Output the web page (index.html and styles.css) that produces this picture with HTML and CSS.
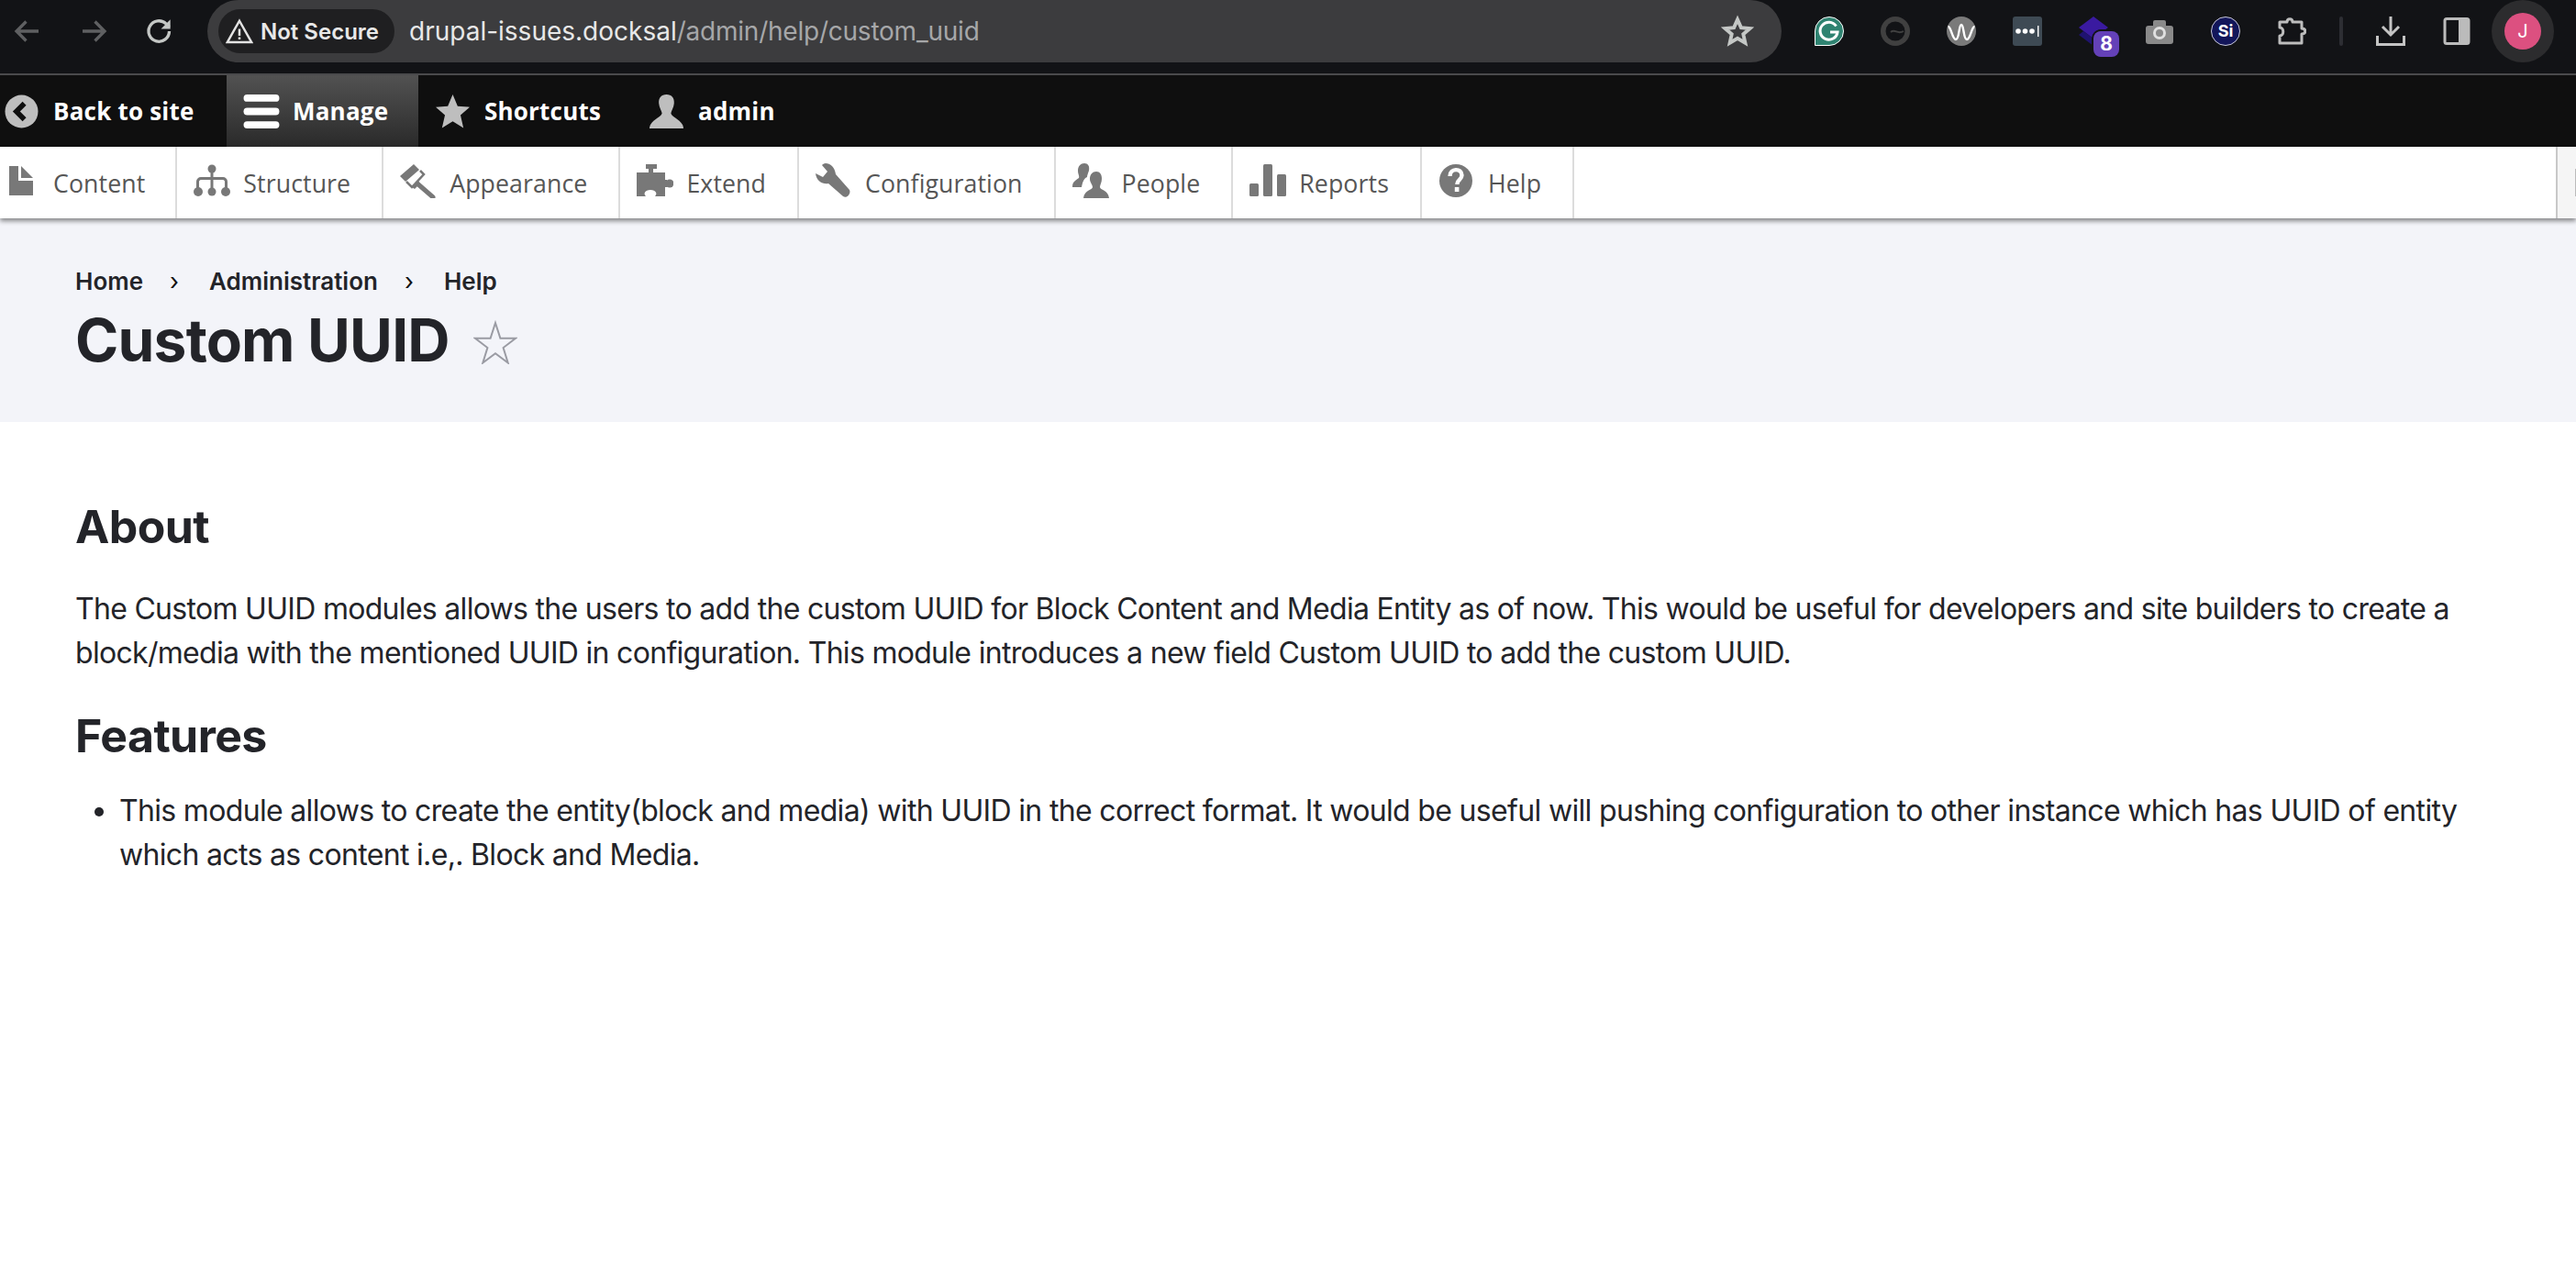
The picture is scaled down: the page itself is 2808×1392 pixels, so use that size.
FILE: index.html
```html
<!DOCTYPE html>
<html lang="en">
<head>
    <meta charset="UTF-8">
    <title>Custom UUID</title>
    <link rel="stylesheet" href="styles.css">
</head>
<body>
    <header class="browser-bar">
        <div class="nav-buttons">
            <svg class="nav-icon" viewBox="0 0 24 24"><path d="M20 12H5M11 5l-7 7 7 7" fill="none" stroke="#5f6062" stroke-width="2.2"/></svg>
            <svg class="nav-icon" viewBox="0 0 24 24"><path d="M4 12h15M13 5l7 7-7 7" fill="none" stroke="#5f6062" stroke-width="2.2"/></svg>
            <svg class="nav-icon" viewBox="0 0 24 24"><path d="M19 12a7.500 7.500 0 1 1-2.300-5.400L19 9" fill="none" stroke="#c4c7c5" stroke-width="2.2"/><path d="M19.800 3.500v6.800H13z" fill="#c4c7c5"/></svg>
        </div>
        <div class="omnibox">
            <div class="security-chip">
                <svg class="warn-icon" viewBox="0 0 24 24"><path d="M12 3 L22.500 21.500 H1.500 Z" fill="none" stroke="#e3e3e3" stroke-width="2"/><path d="M11 10h2v6h-2zM11 17.200h2v2h-2z" fill="#e3e3e3"/></svg>
                <span>Not Secure</span>
            </div>
            <div class="url"><span class="url-host">drupal-issues.docksal</span>/admin/help/custom_uuid</div>
            <svg class="bookmark-icon" viewBox="0 0 24 24"><path d="M12 3.500l2.600 5.900 6.400.6-4.800 4.200 1.400 6.300L12 17.200l-5.600 3.300 1.400-6.300L3 10l6.400-.6z" fill="none" stroke="#c4c7c5" stroke-width="2.6"/></svg>
        </div>
        <div class="extensions">
            <svg class="ext-icon" viewBox="0 0 32 32"><path d="M16 .5a15.500 15.500 0 0 1 0 31H.5V16A15.500 15.500 0 0 1 16 .5z" fill="#2f8371" stroke="#fff" stroke-width="1"/><path d="M23.500 10.500a9.500 9.500 0 1 0 1.500 6.500h-8" fill="none" stroke="#fff" stroke-width="3"/></svg>
            <svg class="ext-icon" viewBox="0 0 32 32"><circle cx="16" cy="16" r="16" fill="#404040"/><circle cx="16" cy="16" r="10.500" fill="#121316"/><path d="M11 17c5-4 7 3 14-1" fill="none" stroke="#404040" stroke-width="2"/></svg>
            <svg class="ext-icon" viewBox="0 0 32 32"><circle cx="16" cy="16" r="16" fill="#7a7a7a"/><path d="M1.500 11C5 11 6 25 10 25c4 0 3-16 6-16s2 16 6 16c4 0 5-14 8.500-14" fill="none" stroke="#fff" stroke-width="2.400"/></svg>
            <svg class="ext-icon" viewBox="0 0 32 32"><rect width="32" height="32" rx="3" fill="#3e4a54"/><circle cx="6" cy="16" r="2.800" fill="#fff"/><circle cx="13.500" cy="16" r="2.800" fill="#fff"/><circle cx="21" cy="16" r="2.800" fill="#fff"/><rect x="27" y="10" width="1.400" height="12" fill="#fff"/></svg>
            <div class="ext-badged">
                <svg class="ext-icon" viewBox="0 0 32 32"><path d="M0 20l5-4 11 8 11-8 5 4-16 12z" fill="#1f1370"/><path d="M16 0l16 12-16 12L0 12z" fill="#3a1aa0"/></svg>
                <span class="ext-badge">8</span>
            </div>
            <svg class="ext-icon" viewBox="0 0 32 32"><rect x="9" y="4" width="14" height="9" rx="2" fill="#8a8a8a"/><rect x="1" y="10" width="30" height="20" rx="3" fill="#8a8a8a"/><circle cx="16" cy="18" r="5.500" fill="none" stroke="#e0e0e0" stroke-width="3"/></svg>
            <div class="ext-si">Si</div>
            <svg class="ext-icon" viewBox="0 0 32 32"><path d="M3 6H11C11 1.500 17 1.500 17 6H27V13C32 13 32 19 27 19V29H3V21C8 21 8 12 3 12Z" fill="none" stroke="#bdbdbd" stroke-width="3" stroke-linejoin="round"/></svg>
            <span class="ext-sep"></span>
            <svg class="ext-icon" viewBox="0 0 32 32"><path d="M16 0v18M7 11l9 9 9-9M1.500 21v9.500h29V21" fill="none" stroke="#c4c4c4" stroke-width="3"/></svg>
            <svg class="ext-icon" viewBox="0 0 32 32"><rect x="3" y="2.500" width="26" height="27" rx="2" fill="none" stroke="#bbb" stroke-width="3"/><rect x="18" y="2.500" width="11" height="27" fill="#bbb"/></svg>
            <div class="avatar-wrap"><div class="avatar">J</div></div>
        </div>
    </header>

    <nav class="toolbar">
        <a class="toolbar-item back-item">
            <svg class="toolbar-icon" viewBox="0 0 36 36"><circle cx="18" cy="18" r="17.500" fill="#bebebe"/><path d="M21 9.500L12.500 18l8.500 8.500" fill="none" stroke="#0f0f0f" stroke-width="5.500"/></svg>
            <span>Back to site</span>
        </a>
        <a class="toolbar-item manage-item">
            <svg class="toolbar-icon" viewBox="0 0 40 38"><rect width="40" height="8" y="0" rx="4" fill="#fff"/><rect width="40" height="8" y="15" rx="4" fill="#fff"/><rect width="40" height="8" y="30" rx="4" fill="#fff"/></svg>
            <span>Manage</span>
        </a>
        <a class="toolbar-item shortcuts-item">
            <svg class="toolbar-icon" viewBox="0 0 38 38"><path d="M19 0l5.500 13 13.500 1-10.300 9 3.300 14.500L19 30l-12 7.500L10.300 23 0 14l13.500-1z" fill="#bebebe"/></svg>
            <span>Shortcuts</span>
        </a>
        <a class="toolbar-item admin-item">
            <svg class="toolbar-icon" viewBox="0 0 38 38"><path d="M19 0c6 0 9 4 8.500 10-.4 5-3 8-3.500 11 1 4 9 6 13 13 1 2 1 4 1 4H0s0-2 1-4c4-7 12-9 13-13-.5-3-3.100-6-3.500-11C10 4 13 0 19 0z" fill="#bebebe"/></svg>
            <span>admin</span>
        </a>
    </nav>

    <nav class="tray">
        <a class="tray-item first-item">
            <svg class="tray-icon" viewBox="0 0 26 38"><path d="M0 3h10v16h16v16H0z" fill="#787878"/><path d="M13 3l13 13H13z" fill="#787878"/></svg>
            <span>Content</span>
        </a>
        <a class="tray-item">
            <svg class="tray-icon" viewBox="0 0 40 38"><circle cx="20" cy="6" r="4.500" fill="#787878"/><path d="M18.500 8h3v7H32a5 5 0 0 1 5 5v10h-3V20c0-1-1-2-2-2H21.500v12h-3V18H8c-1 0-2 1-2 2v10H3V20a5 5 0 0 1 5-5h10.500z" fill="#787878"/><circle cx="5" cy="31" r="5" fill="#787878"/><circle cx="20" cy="31" r="4.500" fill="#787878"/><circle cx="35" cy="31" r="5" fill="#787878"/></svg>
            <span>Structure</span>
        </a>
        <a class="tray-item">
            <svg class="tray-icon" viewBox="0 0 40 38"><path d="M15 1L0 14l6 6L21 7z" fill="#787878"/><path d="M7 20l6 6 13-14-4-4" fill="none" stroke="#787878" stroke-width="2.500"/><path d="M13 26l3 2 6-6-2-3z" fill="#787878"/><path d="M20 23l16 14" stroke="#787878" stroke-width="5" stroke-linecap="round"/></svg>
            <span>Appearance</span>
        </a>
        <a class="tray-item">
            <svg class="tray-icon" viewBox="0 0 40 38"><path d="M0 10H13V6H10V1H22V6H18V10H31V18H33V26H31V36H20C23 33 21 29 15 29 9 29 7 33 10 36H0z" fill="#787878"/><circle cx="36" cy="22" r="4.500" fill="#787878"/></svg>
            <span>Extend</span>
        </a>
        <a class="tray-item">
            <svg class="tray-icon" viewBox="0 0 40 38"><path d="M11 0C16 0 21 4 22 12L37 29C39 33 34 39 30 36L14 22C8 23 1 20 0 11L8 15 13 9 7 2C8 1 9 0 11 0z" fill="#787878"/></svg>
            <span>Configuration</span>
        </a>
        <a class="tray-item">
            <svg class="tray-icon" viewBox="0 0 40 38"><path d="M13 0c4 0 6 3 5 8-1 3-2 5-2 7-4 2-5 6-6 11H0c0-6 3-7 7-10 1-2-1-4-1-8 0-5 3-8 7-8z" fill="#787878"/><path d="M26 9c4 0 6 3 6 8 0 4-2 6-2 9 0 3 9 3 10 12H12c1-9 10-9 10-12 0-3-3-5-3-9 0-5 3-8 7-8z" fill="#787878"/></svg>
            <span>People</span>
        </a>
        <a class="tray-item">
            <svg class="tray-icon" viewBox="0 0 40 38"><rect x="0" y="22" width="10" height="14" rx="1.500" fill="#787878"/><rect x="15" y="1" width="10" height="35" rx="1.500" fill="#787878"/><rect x="30" y="12" width="10" height="24" rx="1.500" fill="#787878"/></svg>
            <span>Reports</span>
        </a>
        <a class="tray-item">
            <svg class="tray-icon" viewBox="0 0 40 38"><circle cx="19" cy="19" r="18" fill="#787878"/><path d="M12.500 14c0-9 13-9 13-1 0 5-5 5-5 9v1" fill="none" stroke="#fff" stroke-width="4.400"/><rect x="17.800" y="26" width="4.600" height="5" fill="#fff"/></svg>
            <span>Help</span>
        </a>
        <span class="tray-spacer"></span>
        <span class="tray-toggle"><span class="toggle-mark"></span></span>
    </nav>

    <section class="page-header">
        <ol class="breadcrumb">
            <li>Home</li>
            <li class="crumb-sep">›</li>
            <li>Administration</li>
            <li class="crumb-sep">›</li>
            <li>Help</li>
        </ol>
        <div class="title-row">
            <h1>Custom UUID</h1>
            <svg class="title-star" viewBox="0 0 48 48"><path d="M24 3l5.400 16.800H46L32.600 30l5.100 16.500L24 36.200 10.300 46.500 15.400 30 2 19.800h16.600z" fill="none" stroke="#9a9ba3" stroke-width="2"/></svg>
        </div>
    </section>

    <main class="content">
        <h2>About</h2>
        <p>The Custom UUID modules allows the users to add the custom UUID for Block Content and Media Entity as of now. This would be useful for developers and site builders to create a block/media with the mentioned UUID in configuration. This module introduces a new field Custom UUID to add the custom UUID.</p>
        <h2>Features</h2>
        <ul>
            <li>This module allows to create the entity(block and media) with UUID in the correct format. It would be useful will pushing configuration to other instance which has UUID of entity which acts as content i.e,. Block and Media.</li>
        </ul>
    </main>
</body>
</html>
```

FILE: styles.css
```css
* {
    box-sizing: border-box;
}
html, body {
    margin: 0;
    padding: 0;
    background: #fff;
}
body {
    font-family: Inter, "Liberation Sans", sans-serif;
    color: #232429;
    height: 1392px;
    overflow: hidden;
}

/* browser chrome */
.browser-bar {
    display: flex;
    align-items: flex-start;
    height: 82px;
    background: #121316;
    border-bottom: 2px solid #4a4a4c;
}
.nav-buttons {
    display: flex;
    align-items: center;
    gap: 36px;
    width: 226px;
    height: 68px;
    padding-left: 12px;
}
.nav-icon {
    width: 36px;
    height: 36px;
}
.omnibox {
    display: flex;
    align-items: center;
    width: 1716px;
    height: 68px;
    padding: 0 30px 0 12px;
    background: #3c3c3e;
    border-radius: 34px;
}
.security-chip {
    display: flex;
    align-items: center;
    gap: 8px;
    height: 48px;
    width: 192px;
    padding-left: 8px;
    border-radius: 24px;
    background: #1f1f21;
    color: #e8e8e8;
    font-size: 24px;
    font-weight: 600;
    white-space: nowrap;
}
.warn-icon {
    width: 30px;
    height: 30px;
}
.url {
    flex: 1;
    margin-left: 16px;
    font-size: 28px;
    letter-spacing: -0.23px;
    color: #a6a7a9;
    white-space: nowrap;
}
.url-host {
    color: #e8e8e8;
    letter-spacing: 0;
}
.bookmark-icon {
    width: 36px;
    height: 36px;
}
.extensions {
    display: flex;
    align-items: center;
    height: 68px;
    padding-left: 36px;
}
.ext-icon {
    flex: none;
    width: 32px;
    height: 32px;
    margin-right: 40px;
}
.ext-badged {
    position: relative;
    display: flex;
}
.ext-badge {
    position: absolute;
    left: 16px;
    top: 16px;
    width: 28px;
    height: 28px;
    border-radius: 8px;
    background: #6441b8;
    box-shadow: 0 0 0 2px #121316;
    color: #fff;
    font-size: 21px;
    font-weight: 700;
    line-height: 28px;
    text-align: center;
}
.ext-si {
    flex: none;
    width: 32px;
    height: 32px;
    margin-right: 40px;
    border-radius: 50%;
    background: #13165a;
    border: 1px solid #c8c8d8;
    color: #fff;
    font-size: 18px;
    font-weight: 700;
    line-height: 30px;
    text-align: center;
}
.ext-sep {
    flex: none;
    width: 4px;
    height: 32px;
    margin: 0 36px 0 -4px;
    border-radius: 2px;
    background: #2d2e33;
}
.avatar-wrap {
    display: flex;
    align-items: center;
    justify-content: center;
    width: 68px;
    height: 68px;
    margin-left: -18px;
    border-radius: 50%;
    background: #2c2c2e;
}
.avatar {
    width: 40px;
    height: 40px;
    border-radius: 50%;
    background: #dc5080;
    color: #fff;
    font-size: 20px;
    line-height: 40px;
    text-align: center;
}

/* admin toolbar */
.toolbar {
    display: flex;
    height: 78px;
    background: #0f0f0f;
    color: #fff;
    font-family: "Open Sans", sans-serif;
    font-size: 26px;
    font-weight: 700;
    letter-spacing: 0.2px;
}
.toolbar-item {
    display: flex;
    align-items: center;
    gap: 16px;
    height: 100%;
    white-space: nowrap;
}
.toolbar-icon {
    flex: none;
    width: 37px;
    height: 37px;
}
.back-item {
    width: 247px;
    padding-left: 5px;
}
.manage-item {
    width: 209px;
    padding-left: 18px;
    gap: 14px;
    background: linear-gradient(#525252, #2a2a2a);
}
.manage-item .toolbar-icon {
    width: 40px;
}
.shortcuts-item {
    width: 233px;
    padding-left: 19px;
}
.admin-item {
    padding-left: 19px;
}

/* tray */
.tray {
    position: relative;
    display: flex;
    height: 78px;
    background: #fff;
    color: #565656;
    font-family: "Open Sans", sans-serif;
    font-size: 26.7px;
    letter-spacing: 0.1px;
    box-shadow: 0 3px 5px rgba(0, 0, 0, 0.45);
}
.tray-item {
    display: flex;
    align-items: center;
    gap: 14px;
    height: 100%;
    padding: 0 34px 0 18px;
    border-right: 2px solid #dcdcdc;
    white-space: nowrap;
}
.first-item {
    padding-left: 10px;
    padding-right: 33px;
    gap: 22px;
}
.tray-icon {
    flex: none;
    width: 40px;
    height: 38px;
    margin-bottom: 4px;
}
.first-item .tray-icon {
    width: 26px;
}
.tray-spacer {
    flex: 1;
}
.tray-toggle {
    display: flex;
    align-items: center;
    justify-content: flex-end;
    width: 22px;
    background: #f5f5f5;
    border-left: 2px solid #c8c8c8;
}
.toggle-mark {
    width: 1px;
    height: 30px;
    background: #bbb;
}

/* page header */
.page-header {
    height: 222px;
    padding: 50px 82px 0;
    background: #f3f4f9;
}
.breadcrumb {
    display: flex;
    gap: 31px;
    margin: 0;
    padding: 0;
    list-style: none;
    font-size: 26px;
    font-weight: 600;
    line-height: 38px;
}
.crumb-sep {
    margin: 0 2px 0 -2px;
    color: #111;
    font-weight: 400;
}
.title-row {
    display: flex;
    align-items: center;
    gap: 26px;
    margin-top: 6px;
}
h1 {
    margin: 0;
    font-size: 64px;
    font-weight: 700;
    line-height: 78px;
    letter-spacing: -0.8px;
}
.title-star {
    width: 48px;
    height: 48px;
    margin-top: 4px;
}

/* content */
.content {
    padding: 0 64px 0 82px;
    font-size: 32px;
    line-height: 48px;
    letter-spacing: -0.67px;
}
h2 {
    margin: 0;
    font-size: 50px;
    font-weight: 700;
    line-height: 60px;
    letter-spacing: -0.6px;
}
.content h2:first-child {
    margin-top: 84px;
}
p {
    margin: 36px 0 0;
    letter-spacing: -0.7px;
}
.content p + h2 {
    margin-top: 36px;
}
ul {
    margin: 28px 0 0;
    padding-left: 48px;
}
```
